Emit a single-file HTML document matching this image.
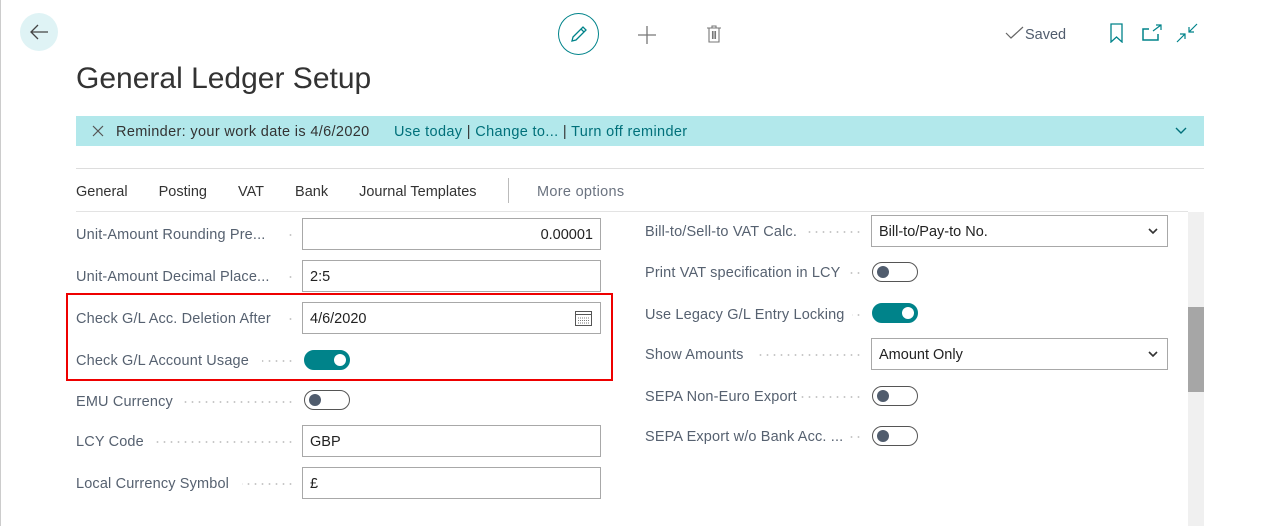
<!DOCTYPE html>
<html><head><meta charset="utf-8"><style>
*{box-sizing:border-box;margin:0;padding:0}
body{width:1262px;height:526px;background:#fff;font-family:"Liberation Sans",sans-serif;color:#505c6d;position:relative;overflow:hidden}
.a{position:absolute}
.lbl{position:absolute;font-size:14.5px;color:#566170;white-space:nowrap;letter-spacing:0.15px}
.dots{position:absolute;height:2px;background-image:radial-gradient(circle,#c8c8c8 0.8px,transparent 1.1px);background-size:7px 2px;background-repeat:repeat-x;background-position:right}
.inp{position:absolute;border:1px solid #a8a8a8;height:32px;font-size:14.5px;color:#222;padding:8px 7px 0;background:#fff}
.tg{position:absolute;width:46px;height:20px;border-radius:10px;border:1px solid #555}
.tg i{position:absolute;top:3px;left:4px;width:12px;height:12px;border-radius:50%;background:#505c6d}
.tg.on{background:#00838a;border-color:#00838a}
.tg.on i{left:auto;right:3px;background:#fff}
.chev{position:absolute;right:8px;top:9px}
</style></head><body>
<div class="a" style="left:0;top:0;width:1px;height:526px;background:#ccc"></div>
<div class="a" style="left:20px;top:13px;width:38px;height:38px;border-radius:50%;background:#dff3f5"></div>
<svg class="a" style="left:28px;top:22px" width="22" height="20" viewBox="0 0 22 20"><path d="M20 10H3M10 3L3 10l7 7" fill="none" stroke="#444" stroke-width="1.3"/></svg>
<div class="a" style="left:558px;top:13px;width:41px;height:42px;border-radius:50%;border:1.3px solid #00838a"></div>
<svg class="a" style="left:568px;top:23px" width="22" height="22" viewBox="0 0 22 22"><path d="M4 18l1-4L15 4l3 3L8 17z M13 6l3 3" fill="none" stroke="#00838a" stroke-width="1.3"/></svg>
<svg class="a" style="left:636px;top:24px" width="22" height="22"><path d="M11 2v18M2 11h18" stroke="#777" stroke-width="1.3"/></svg>
<svg class="a" style="left:706px;top:24px" width="16" height="20"><path d="M1 4h14M6 4V2h4v2M3 4v14h10V4M6.5 7v8M8 7v8M9.5 7v8" fill="none" stroke="#777" stroke-width="1.1"/></svg>
<svg class="a" style="left:1005px;top:26px" width="20" height="14"><path d="M1 7l5 5L18 1" fill="none" stroke="#666" stroke-width="1.2"/></svg>
<div class="a" style="left:1025px;top:27px;font-size:14.5px;color:#505c6d">Saved</div>
<svg class="a" style="left:1109px;top:23px" width="16" height="20"><path d="M2 1h11v18l-5.5-5L2 19z" fill="none" stroke="#00838a" stroke-width="1.3"/></svg>
<svg class="a" style="left:1141px;top:24px" width="22" height="18"><path d="M8 5H2v11h15v-6" fill="none" stroke="#00838a" stroke-width="1.5"/><path d="M12 7l8-6M15 1h5v5" fill="none" stroke="#00838a" stroke-width="1.2"/></svg>
<svg class="a" style="left:1176px;top:23px" width="22" height="20"><path d="M21 1l-8 8M13 4v5h5M1 19l8-8M4 11h5v5" fill="none" stroke="#00838a" stroke-width="1.2"/></svg>
<div class="a" style="left:76px;top:62px;font-size:30px;font-weight:300;color:#333">General Ledger Setup</div>
<div class="a" style="left:76px;top:116px;width:1128px;height:30px;background:#b2e8eb"></div>
<svg class="a" style="left:91px;top:124px" width="14" height="14"><path d="M2 2l10 10M12 2L2 12" stroke="#555" stroke-width="1.2"/></svg>
<div class="a" style="left:116px;top:124px;font-size:14.5px;color:#333;white-space:nowrap;letter-spacing:0.35px">Reminder: your work date is 4/6/2020 <span style="margin-left:20px;color:#00707a">Use today</span> | <span style="color:#00707a">Change to...</span> | <span style="color:#00707a">Turn off reminder</span></div>
<svg class="a" style="left:1175px;top:127px" width="12" height="8"><path d="M1 1l5 5 5-5" fill="none" stroke="#00707a" stroke-width="1.4"/></svg>
<div class="a" style="left:76px;top:168px;width:1128px;height:1px;background:#ddd"></div>
<div class="a" style="left:76px;top:184px;font-size:14.5px;color:#333;white-space:nowrap">General<span style="margin-left:31px">Posting</span><span style="margin-left:31px">VAT</span><span style="margin-left:31px">Bank</span><span style="margin-left:31px">Journal Templates</span></div>
<div class="a" style="left:508px;top:178px;width:1px;height:25px;background:#bbb"></div>
<div class="a" style="left:537px;top:184px;font-size:14.5px;color:#6b7380;letter-spacing:0.3px">More options</div>
<div class="a" style="left:76px;top:211px;width:1112px;height:1px;background:#e3e3e3"></div>
<div class="a" style="left:1188px;top:212px;width:16px;height:314px;background:#f0f0f0"></div>
<div class="a" style="left:1188px;top:307px;width:16px;height:85px;background:#a6a6a6"></div>

<div class="lbl" style="left:76px;top:227px">Unit-Amount Rounding Pre...</div><div class="dots" style="left:286px;top:234px;width:8px"></div>
<div class="inp" style="left:302px;top:218px;width:299px;text-align:right">0.00001</div>
<div class="lbl" style="left:76px;top:269px">Unit-Amount Decimal Place...</div><div class="dots" style="left:286px;top:276px;width:8px"></div>
<div class="inp" style="left:302px;top:260px;width:299px">2:5</div>
<div class="lbl" style="left:76px;top:311px">Check G/L Acc. Deletion After</div><div class="dots" style="left:286px;top:318px;width:8px"></div>
<div class="inp" style="left:302px;top:302px;width:299px">4/6/2020</div>
<svg class="a" style="left:575px;top:310px" width="18" height="17"><rect x="0.5" y="1.5" width="16" height="14" fill="none" stroke="#555"/><path d="M0.5 4.5h16" stroke="#555"/><path d="M3 8h11M3 10.5h11M3 13h11" stroke="#777" stroke-dasharray="1 1"/></svg>
<div class="lbl" style="left:76px;top:353px">Check G/L Account Usage</div><div class="dots" style="left:262px;top:360px;width:32px"></div>
<div class="tg on" style="left:304px;top:350px"><i></i></div>
<div class="a" style="left:66px;top:293px;width:547px;height:88px;border:2px solid #e00"></div>
<div class="lbl" style="left:76px;top:394px">EMU Currency</div><div class="dots" style="left:184px;top:401px;width:110px"></div>
<div class="tg" style="left:304px;top:390px"><i></i></div>
<div class="lbl" style="left:76px;top:434px">LCY Code</div><div class="dots" style="left:156px;top:441px;width:138px"></div>
<div class="inp" style="left:302px;top:425px;width:299px">GBP</div>
<div class="lbl" style="left:76px;top:476px">Local Currency Symbol</div><div class="dots" style="left:242px;top:483px;width:52px"></div>
<div class="inp" style="left:302px;top:467px;width:299px">£</div>

<div class="lbl" style="left:645px;top:224px">Bill-to/Sell-to VAT Calc.</div><div class="dots" style="left:808px;top:231px;width:54px"></div>
<div class="inp" style="left:871px;top:215px;width:297px">Bill-to/Pay-to No.<svg class="chev" width="12" height="12"><path d="M2 4l4 4 4-4" fill="none" stroke="#333" stroke-width="1.6"/></svg></div>
<div class="lbl" style="left:645px;top:265px">Print VAT specification in LCY</div><div class="dots" style="left:848px;top:272px;width:14px"></div>
<div class="tg" style="left:872px;top:262px"><i></i></div>
<div class="lbl" style="left:645px;top:307px">Use Legacy G/L Entry Locking</div><div class="dots" style="left:852px;top:314px;width:10px"></div>
<div class="tg on" style="left:872px;top:303px"><i></i></div>
<div class="lbl" style="left:645px;top:347px">Show Amounts</div><div class="dots" style="left:756px;top:354px;width:106px"></div>
<div class="inp" style="left:871px;top:338px;width:297px">Amount Only<svg class="chev" width="12" height="12"><path d="M2 4l4 4 4-4" fill="none" stroke="#333" stroke-width="1.6"/></svg></div>
<div class="lbl" style="left:645px;top:389px">SEPA Non-Euro Export</div><div class="dots" style="left:800px;top:396px;width:62px"></div>
<div class="tg" style="left:872px;top:386px"><i></i></div>
<div class="lbl" style="left:645px;top:429px">SEPA Export w/o Bank Acc. ...</div><div class="dots" style="left:850px;top:436px;width:12px"></div>
<div class="tg" style="left:872px;top:426px"><i></i></div>
</body></html>
